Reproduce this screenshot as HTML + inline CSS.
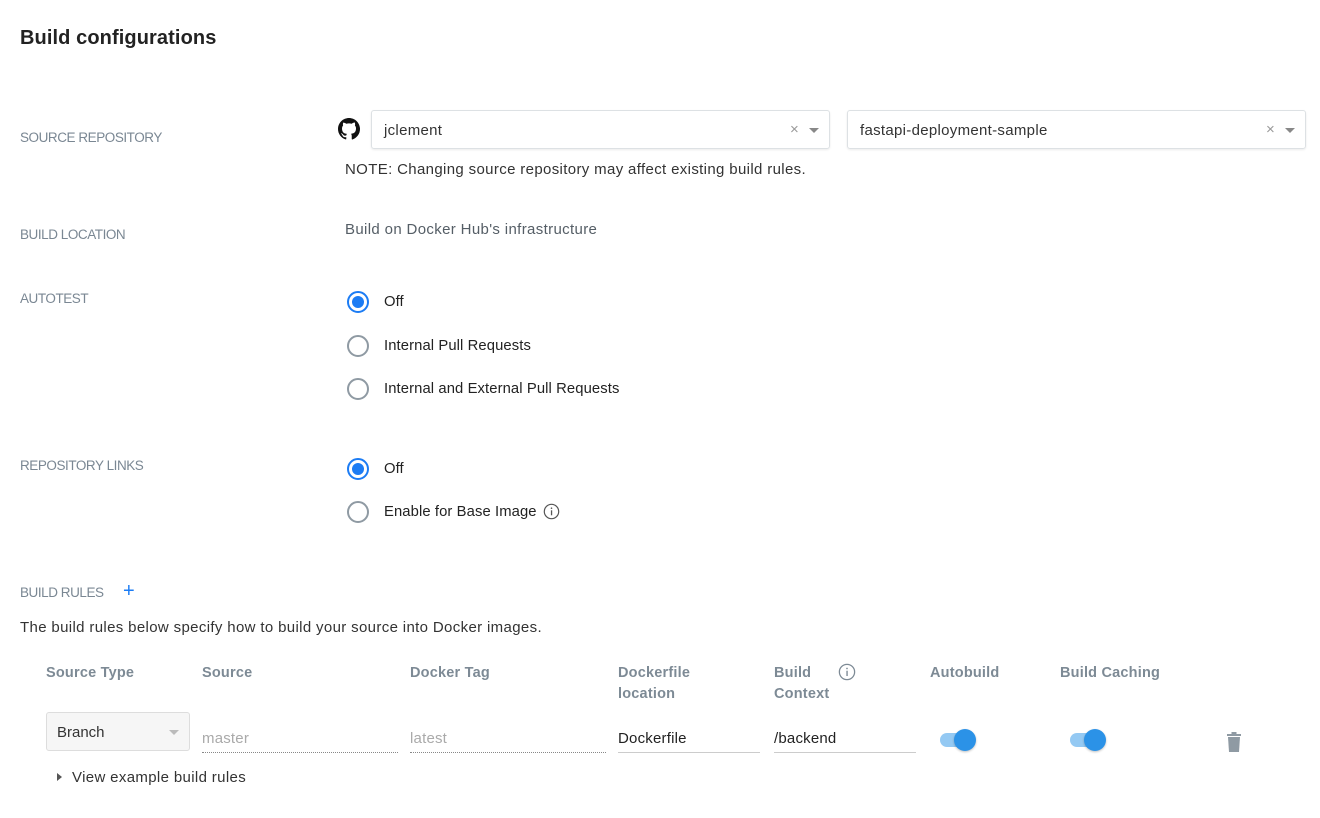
<!DOCTYPE html>
<html><head><meta charset="utf-8"><style>
*{box-sizing:border-box;margin:0;padding:0}
body{width:1320px;height:818px;background:#fff;font-family:"Liberation Sans",sans-serif;color:#333;position:relative;overflow:hidden}
.a{position:absolute;white-space:nowrap}
.lbl{font-size:13.5px;color:#7a8793;letter-spacing:-0.45px}
.os{font-size:15px;letter-spacing:0.35px}
.sel{position:absolute;height:39px;border:1px solid #dde1e4;border-radius:3px;font-size:15px;letter-spacing:0.3px;color:#333;padding:11px 12px;box-shadow:0 1px 2px rgba(0,0,0,.08)}
.x{position:absolute;color:#999;font-size:15px;top:10px}
.caret{position:absolute;top:17px;width:0;height:0;border-left:5px solid transparent;border-right:5px solid transparent;border-top:5px solid #888}
.radio{position:absolute;width:22px;height:22px;border-radius:50%;border:2px solid #8f9aa3}
.radio.on{border-color:#1c7cf4}
.radio.on:after{content:"";position:absolute;left:3px;top:3px;width:12px;height:12px;border-radius:50%;background:#1c7cf4}
.rt{font-size:14.8px;color:#222;letter-spacing:0.1px}
.th{font-size:14.5px;font-weight:bold;color:#7d8a95;line-height:21px;letter-spacing:0.2px}
.inp{position:absolute;height:26px;font-size:15px;border-bottom:1px solid #ccc;padding-top:3px;letter-spacing:0.2px}
.tog{position:absolute;width:32px;height:14px;border-radius:7px;background:#94c9f3}
.tog:after{content:"";position:absolute;right:-4px;top:-4px;width:22px;height:22px;border-radius:50%;background:#2b92e7;box-shadow:0 1px 2px rgba(0,0,0,.25)}
</style></head><body>
<div class="a" style="left:20px;top:27px;font-size:20px;font-weight:bold;color:#222;letter-spacing:0.1px">Build configurations</div>

<div class="a lbl" style="left:20px;top:130px">SOURCE REPOSITORY</div>
<svg class="a" style="left:338px;top:118px" width="22" height="22" viewBox="0 0 16 16"><path fill="#111" d="M8 0C3.580 0 0 3.58 0 8c0 3.54 2.29 6.53 5.47 7.59.4.07.55-.17.55-.38v-1.33c-2.230.48-2.7-1.07-2.7-1.07-.36-.92-.89-1.170-.89-1.17-.73-.5.06-.49.06-.49.8.06 1.23.83 1.23.83.72 1.23 1.87.87 2.33.67.07-.52.28-.87.51-1.07-1.780-.2-3.640-.89-3.640-3.95 0-.87.31-1.59.82-2.15-.08-.2-.36-1.02.08-2.12 0 0 .67-.21 2.2.82A7.6 7.6 0 0 1 8 3.87c.68 0 1.36.09 2 .27 1.53-1.04 2.2-.82 2.2-.82.44 1.1.16 1.92.08 2.12.51.56.82 1.27.82 2.15 0 3.07-1.87 3.75-3.65 3.95.29.25.54.73.54 1.48v2.2c0 .21.15.46.55.38A8 8 0 0 0 16 8c0-4.42-3.58-8-8-8z"/></svg>
<div class="sel" style="left:371px;top:110px;width:459px">jclement<span class="x" style="right:30px">×</span><span class="caret" style="right:10px"></span></div>
<div class="sel" style="left:847px;top:110px;width:459px">fastapi-deployment-sample<span class="x" style="right:30px">×</span><span class="caret" style="right:10px"></span></div>
<div class="a os" style="left:345px;top:161px;color:#333">NOTE: Changing source repository may affect existing build rules.</div>

<div class="a lbl" style="left:20px;top:227px">BUILD LOCATION</div>
<div class="a os" style="left:345px;top:221px;color:#555e66">Build on Docker Hub's infrastructure</div>

<div class="a lbl" style="left:20px;top:291px">AUTOTEST</div>
<div class="radio on" style="left:347px;top:291px"></div><div class="a rt" style="left:384px;top:294px">Off</div>
<div class="radio" style="left:347px;top:335px"></div><div class="a rt" style="left:384px;top:338px">Internal Pull Requests</div>
<div class="radio" style="left:347px;top:378px"></div><div class="a rt" style="left:384px;top:381px">Internal and External Pull Requests</div>

<div class="a lbl" style="left:20px;top:458px">REPOSITORY LINKS</div>
<div class="radio on" style="left:347px;top:458px"></div><div class="a rt" style="left:384px;top:461px">Off</div>
<div class="radio" style="left:347px;top:501px"></div><div class="a rt" style="left:384px;top:504px">Enable for Base Image</div>
<svg class="a" style="left:543px;top:503px" width="17" height="17" viewBox="0 0 17 17"><circle cx="8.5" cy="8.5" r="7.2" fill="none" stroke="#555" stroke-width="1.2"/><rect x="7.9" y="7.3" width="1.3" height="5" fill="#555"/><circle cx="8.5" cy="5.2" r=".8" fill="#555"/></svg>

<div class="a lbl" style="left:20px;top:585px">BUILD RULES</div>
<div class="a" style="left:123px;top:580px;font-size:20px;color:#1c7cf4">+</div>
<div class="a os" style="left:20px;top:619px;color:#333">The build rules below specify how to build your source into Docker images.</div>

<div class="a th" style="left:46px;top:663px">Source Type</div>
<div class="a th" style="left:202px;top:663px">Source</div>
<div class="a th" style="left:410px;top:663px">Docker Tag</div>
<div class="a th" style="left:618px;top:663px">Dockerfile<br>location</div>
<div class="a th" style="left:774px;top:663px">Build<br>Context</div>
<svg class="a" style="left:838px;top:663px" width="18" height="18" viewBox="0 0 17 17"><circle cx="8.5" cy="8.5" r="7.2" fill="none" stroke="#7d8a95" stroke-width="1.2"/><rect x="7.9" y="7.3" width="1.3" height="5" fill="#7d8a95"/><circle cx="8.5" cy="5.2" r=".8" fill="#7d8a95"/></svg>
<div class="a th" style="left:930px;top:663px">Autobuild</div>
<div class="a th" style="left:1060px;top:663px">Build Caching</div>

<div class="a" style="left:46px;top:712px;width:144px;height:39px;background:#f6f6f6;border:1px solid #ddd;border-radius:3px;font-size:15px;padding:11px 10px;color:#333">Branch<span class="caret" style="right:10px;border-top-color:#bbb"></span></div>
<div class="inp" style="left:202px;top:727px;width:196px;color:#aaa;border-bottom:1px dotted #888">master</div>
<div class="inp" style="left:410px;top:727px;width:196px;color:#aaa;border-bottom:1px dotted #888">latest</div>
<div class="inp" style="left:618px;top:727px;width:142px;color:#222">Dockerfile</div>
<div class="inp" style="left:774px;top:727px;width:142px;color:#222">/backend</div>
<div class="tog" style="left:940px;top:733px"></div>
<div class="tog" style="left:1070px;top:733px"></div>
<svg class="a" style="left:1226px;top:731px" width="16" height="21" viewBox="0 0 16 21"><rect x="1" y="3" width="14" height="2" fill="#8f9aa3"/><rect x="5.5" y="1" width="5" height="2" fill="#8f9aa3"/><path d="M2 6h12l-1 15H3z" fill="#8f9aa3"/></svg>

<div class="a" style="left:57px;top:773px;width:0;height:0;border-top:4px solid transparent;border-bottom:4px solid transparent;border-left:5px solid #555"></div>
<div class="a os" style="left:72px;top:769px;color:#333">View example build rules</div>
</body></html>
